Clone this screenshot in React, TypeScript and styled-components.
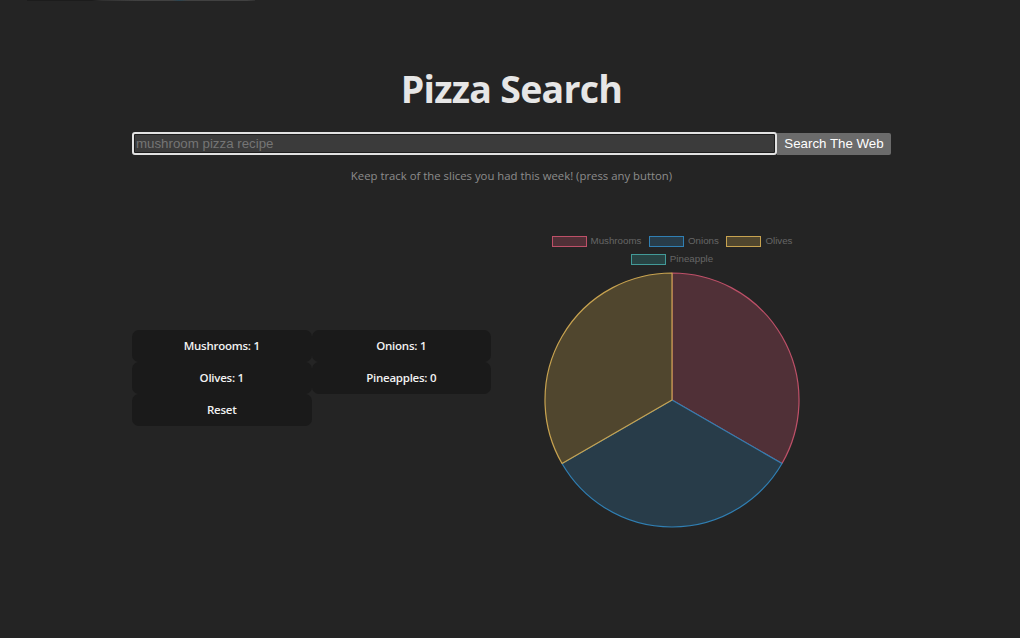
import React, { useState } from "react";
import styled, { createGlobalStyle } from "styled-components";

const GlobalStyle = createGlobalStyle`
  * { box-sizing: border-box; }
  body { margin: 0; background: #242424; color: #e6e6e6; font-family: "Open Sans", "Noto Sans", sans-serif; }
`;

const Page = styled.main`
  height: 638px;
  overflow: hidden;
  display: flex;
  flex-direction: column;
`;

const TopEdge = styled.div`
  height: 1px;
  flex: none;
  margin-left: 27px;
  width: 228px;
  background: linear-gradient(90deg, #1c1c1c 0 65px, #303030 75px, #414141 110px 145px, #294552 152px, #414141 160px 220px, #303030);
`;

const Content = styled.div`
  width: 759px;
  margin: 0 0 0 132px;
  display: flex;
  flex-direction: column;
`;

const Title = styled.h1`
  margin: 63px 0 0;
  height: 50px;
  line-height: 50px;
  font-size: 37.5px;
  font-weight: 700;
  letter-spacing: -0.75px;
  text-align: center;
  white-space: nowrap;
`;

const SearchBar = styled.form`
  display: flex;
  height: 23px;
  margin-top: 18px;
  align-items: center;
`;

const SearchInput = styled.input`
  width: 645px;
  height: 23px;
  margin: 0;
  padding: 0 2px 1px;
  border: 2px solid #e2e2e2;
  border-radius: 3px;
  outline: none;
  background: #3b3b3b;
  box-shadow: inset 0 0 0 1px #1d1d1d;
  color: #fff;
  font: 13.3px "Liberation Sans", Arial, sans-serif;
  &::placeholder { color: #757575; opacity: 1; }
`;

const SearchButton = styled.button`
  width: 114px;
  height: 22px;
  padding: 0 0 1px;
  border: 0;
  border-radius: 0 2px 2px 0;
  background: #6b6b6b;
  color: #fff;
  font: 13.3px "Liberation Sans", Arial, sans-serif;
  white-space: nowrap;
`;

const Hint = styled.p`
  margin: 12px 0 0;
  height: 18px;
  line-height: 18px;
  font-size: 11.35px;
  text-align: center;
  color: #8c8c8c;
  white-space: nowrap;
`;

const Tracker = styled.section`
  display: flex;
  margin-top: 47px;
`;

const Counters = styled.div`
  width: 359px;
  margin-top: 98px;
  display: grid;
  grid-template-columns: 1fr 1fr;
  grid-auto-rows: 32px;
  align-content: start;
`;

const CounterButton = styled.button`
  border: 0;
  border-radius: 7px;
  padding: 0 0 1px;
  background: #1a1a1a;
  color: #f2f2f2;
  font: 600 11.5px "Open Sans", "Noto Sans", sans-serif;
  letter-spacing: -0.25px;
`;

const Chart = styled.div`
  width: 256px;
  margin-left: 53px;
  display: flex;
  flex-direction: column;
  align-items: center;
`;

const Legend = styled.div`
  display: flex;
  flex-wrap: wrap;
  justify-content: center;
  column-gap: 7.5px;
  row-gap: 6px;
  padding-top: 3px;
  width: 256px;
`;

const LegendItem = styled.div`
  display: flex;
  align-items: center;
  gap: 4px;
  height: 12px;
  color: #666;
  font: 9.75px/12px "Liberation Sans", Arial, sans-serif;
`;

const Swatch = styled.span<{ $fill: string; $line: string }>`
  width: 35px;
  height: 11px;
  margin-top: 1px;
  background: ${(p) => p.$fill};
  border: 1px solid ${(p) => p.$line};
`;

const Pie = styled.svg`
  display: block;
  margin-top: 7px;
`;

const toppings = [
  { key: "Mushrooms", label: "Mushrooms", fill: "#503037", line: "#be5068" },
  { key: "Onions", label: "Onions", fill: "#283c49", line: "#307fb3" },
  { key: "Olives", label: "Olives", fill: "#50462e", line: "#c8a350" },
  { key: "Pineapples", label: "Pineapple", fill: "#284343", line: "#429a98" },
];

const RADIUS = 127;
const CENTER = 128;

function point(turn: number) {
  const angle = turn * 2 * Math.PI;
  return `${CENTER + RADIUS * Math.sin(angle)} ${CENTER - RADIUS * Math.cos(angle)}`;
}

export default function App() {
  const [counts, setCounts] = useState([1, 1, 1, 0]);
  const total = counts.reduce((a, b) => a + b, 0);
  let turn = 0;

  return (
    <Page>
      <GlobalStyle />
      <TopEdge />
      <Content>
        <Title>Pizza Search</Title>
        <SearchBar onSubmit={(e) => e.preventDefault()}>
          <SearchInput placeholder="mushroom pizza recipe" />
          <SearchButton type="submit">Search The Web</SearchButton>
        </SearchBar>
        <Hint>Keep track of the slices you had this week! (press any button)</Hint>
        <Tracker>
          <Counters>
            {toppings.map((t, i) => (
              <CounterButton key={t.key} onClick={() => setCounts(counts.map((c, j) => (j === i ? c + 1 : c)))}>
                {`${t.key}: ${counts[i]}`}
              </CounterButton>
            ))}
            <CounterButton onClick={() => setCounts([0, 0, 0, 0])}>Reset</CounterButton>
          </Counters>
          <Chart>
            <Legend>
              {toppings.map((t) => (
                <LegendItem key={t.key}>
                  <Swatch $fill={t.fill} $line={t.line} />
                  {t.label}
                </LegendItem>
              ))}
            </Legend>
            <Pie width="256" height="256" viewBox="0 0 256 256">
              {toppings.map((t, i) => {
                if (!counts[i]) return null;
                const share = counts[i] / total;
                const start = turn;
                turn += share;
                if (share === 1) return <circle key={t.key} cx={CENTER} cy={CENTER} r={RADIUS} fill={t.fill} stroke={t.line} />;
                return (
                  <path
                    key={t.key}
                    d={`M${CENTER} ${CENTER} L${point(start)} A${RADIUS} ${RADIUS} 0 ${share > 0.5 ? 1 : 0} 1 ${point(turn)} Z`}
                    fill={t.fill}
                    stroke={t.line}
                    strokeWidth="1.2"
                    strokeLinejoin="bevel"
                  />
                );
              })}
            </Pie>
          </Chart>
        </Tracker>
      </Content>
    </Page>
  );
}
